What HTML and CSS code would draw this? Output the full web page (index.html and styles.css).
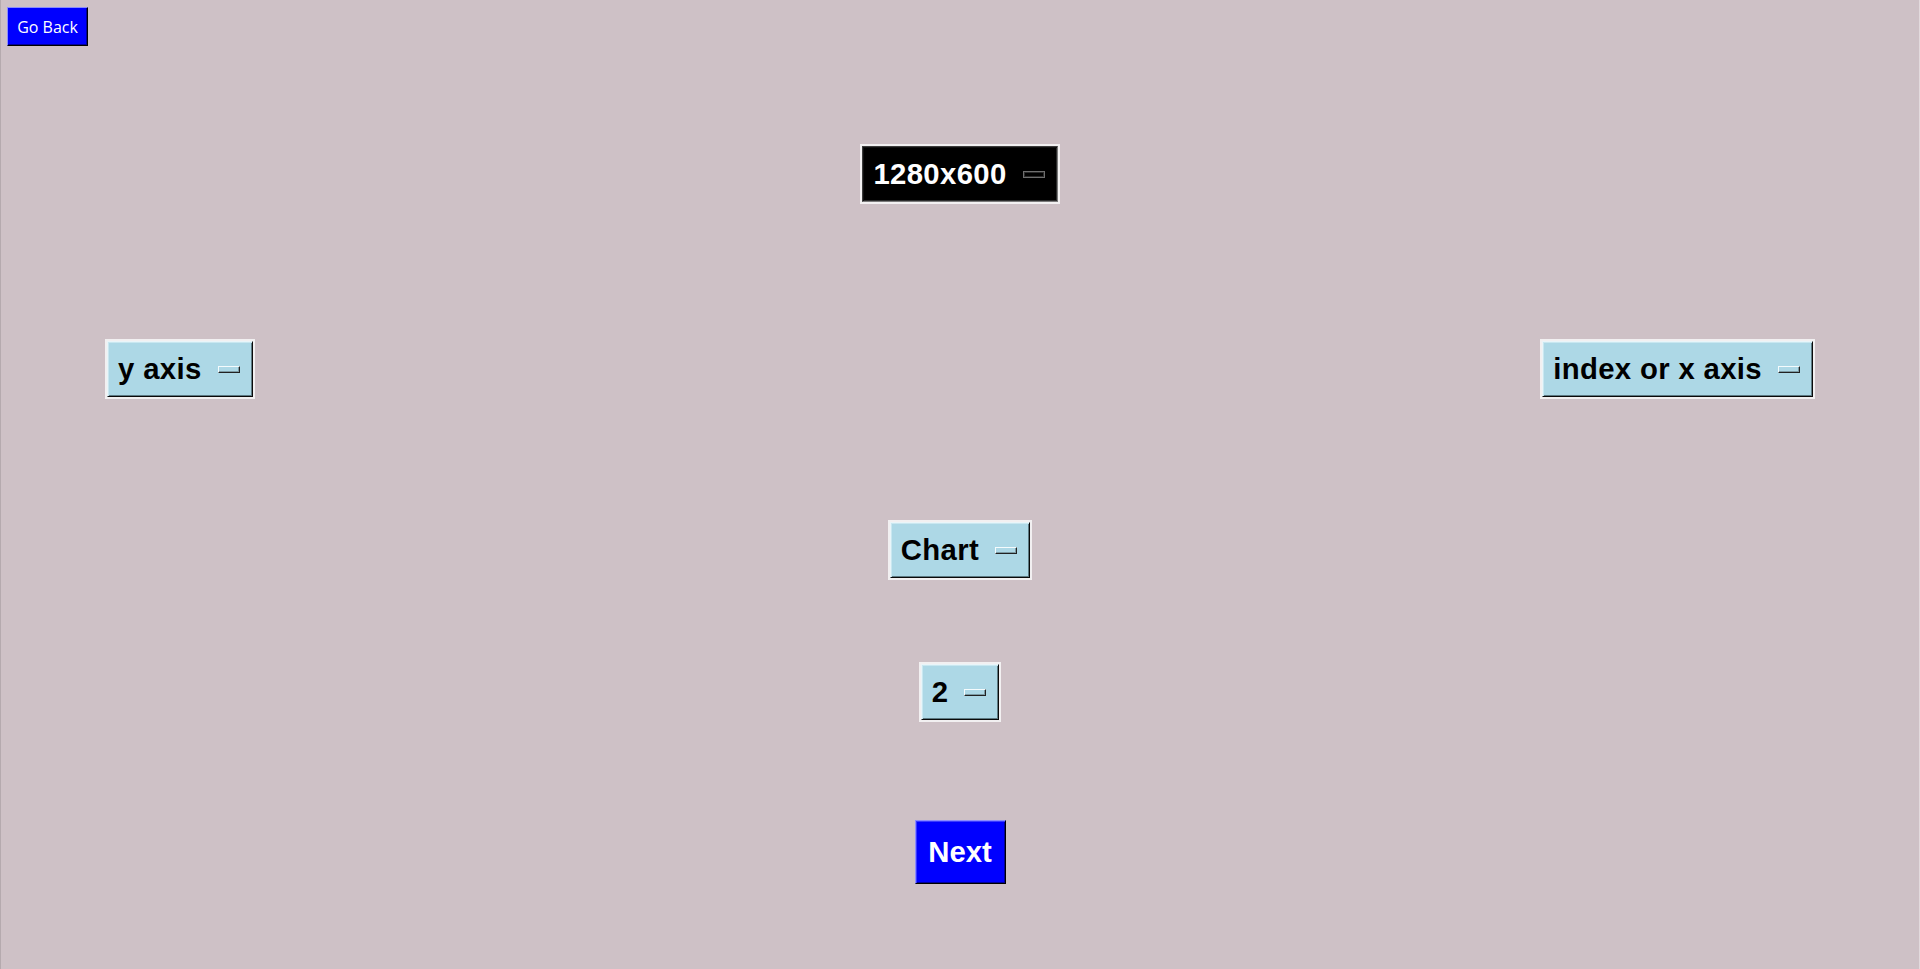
FILE: index.html
```html
<!DOCTYPE html>
<html lang="en">
<head>
<meta charset="utf-8">
<title>Chart setup</title>
<link rel="stylesheet" href="styles.css">
</head>
<body>
<div class="topbar">
  <button class="btn-back" type="button">Go Back</button>
</div>
<main class="stack">
  <div class="opt opt-dark s1"><div class="opt-inner"><span class="opt-label">1280x600</span><span class="ind"></span></div></div>
  <div class="axis-row">
    <div class="opt"><div class="opt-inner"><span class="opt-label">y axis</span><span class="ind"></span></div></div>
    <div class="opt"><div class="opt-inner"><span class="opt-label">index or x axis</span><span class="ind"></span></div></div>
  </div>
  <div class="opt s3"><div class="opt-inner"><span class="opt-label">Chart</span><span class="ind"></span></div></div>
  <div class="opt s4"><div class="opt-inner"><span class="opt-label">2</span><span class="ind"></span></div></div>
  <button class="btn-next" type="button">Next</button>
</main>
</body>
</html>
```
FILE: styles.css
```css
html, body {
  margin: 0;
  padding: 0;
}
body {
  width: 1920px;
  height: 969px;
  background: #cec1c6;
  font-family: "Liberation Sans", Arial, sans-serif;
  overflow: hidden;
  box-sizing: border-box;
  border-left: 1px solid #b5aaae;
  border-right: 1px solid #e2dadd;
}
.topbar {
  padding: 7px 0 0 6px;
  height: 39px;
}
.btn-back {
  box-sizing: border-box;
  height: 39px;
  width: 81px;
  margin: 0;
  padding: 0;
  background: #0000ff;
  color: #ffffff;
  font-family: "Open Sans", "Liberation Sans", sans-serif;
  font-size: 16px;
  border: 1px solid;
  border-color: #8c8cff #000000 #000000 #8c8cff;
  box-shadow: inset -1px -1px 0 #00009a;
  display: flex;
  align-items: center;
  justify-content: center;
}
.stack {
  display: flex;
  flex-direction: column;
  align-items: center;
}
.opt {
  box-sizing: border-box;
  height: 60px;
  border: 2px solid #f2f0f1;
  display: inline-flex;
}
.opt-inner {
  box-sizing: border-box;
  height: 56px;
  display: flex;
  align-items: center;
  background: #add8e6;
  color: #000000;
  border: 1px solid;
  border-color: #e9f5f9 #0a0a0a #0a0a0a #e9f5f9;
  box-shadow: inset 1px 1px 0 #c9e7f0, inset -1px -1px 0 #5d7a83;
  padding: 0 12px 0 10px;
}
.opt-label {
  font-weight: bold;
  font-size: 29.3px;
  line-height: 1;
  letter-spacing: 0.35px;
  white-space: nowrap;
}
.ind {
  box-sizing: border-box;
  width: 22px;
  height: 7px;
  margin-left: 16px;
  border: 1px solid;
  border-color: #f4fbfd #222222 #222222 #f4fbfd;
  box-shadow: inset -1px -1px 0 #7c9aa3;
}
.opt-dark .opt-inner {
  background: #000000;
  color: #ffffff;
  border-color: #3c3c3c #7a7a7a #7a7a7a #3c3c3c;
  box-shadow: inset 1px 1px 0 #101010, inset -1px -1px 0 #2c2c2c;
}
.opt-dark .ind {
  border-color: #6e6e6e #6e6e6e #6e6e6e #6e6e6e;
  box-shadow: inset 1px 1px 0 #2a2a2a, inset -1px -1px 0 #2a2a2a;
}
.s1 {
  margin-top: 98px;
}
.axis-row {
  align-self: stretch;
  display: flex;
  justify-content: space-between;
  padding: 0 104px 0 104px;
  margin-top: 135px;
}
.s3 {
  margin-top: 121px;
}
.s4 {
  margin-top: 82px;
}
.btn-next {
  box-sizing: border-box;
  margin-top: 98px;
  height: 64px;
  width: 91px;
  padding: 0;
  background: #0000ff;
  color: #ffffff;
  font-family: "Liberation Sans", Arial, sans-serif;
  font-weight: bold;
  font-size: 29.3px;
  border: 1px solid;
  border-color: #8c8cff #000000 #000000 #8c8cff;
  box-shadow: inset 1px 1px 0 #3a3aff, inset -1px -1px 0 #00009a;
  display: flex;
  align-items: center;
  justify-content: center;
}
```
